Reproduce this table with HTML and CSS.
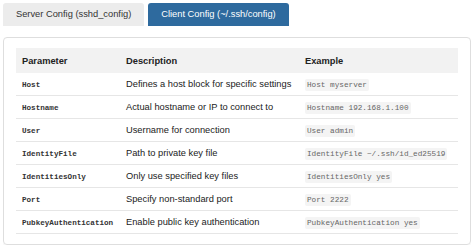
FILE: index.html
```html
<!DOCTYPE html>
<html>
<head>
<meta charset="utf-8">
<link rel="stylesheet" href="styles.css">
</head>
<body>
<div class="tabs">
  <div class="tab">Server Config (sshd_config)</div>
  <div class="tab active">Client Config (~/.ssh/config)</div>
</div>
<div class="card">
  <table class="ref">
    <thead>
      <tr><th class="c1">Parameter</th><th class="c2">Description</th><th class="c3">Example</th></tr>
    </thead>
    <tbody>
      <tr><td><span class="param">Host</span></td><td>Defines a host block for specific settings</td><td><code>Host myserver</code></td></tr>
      <tr><td><span class="param">Hostname</span></td><td>Actual hostname or IP to connect to</td><td><code>Hostname 192.168.1.100</code></td></tr>
      <tr><td><span class="param">User</span></td><td>Username for connection</td><td><code>User admin</code></td></tr>
      <tr><td><span class="param">IdentityFile</span></td><td>Path to private key file</td><td><code>IdentityFile ~/.ssh/id_ed25519</code></td></tr>
      <tr><td><span class="param">IdentitiesOnly</span></td><td>Only use specified key files</td><td><code>IdentitiesOnly yes</code></td></tr>
      <tr><td><span class="param">Port</span></td><td>Specify non-standard port</td><td><code>Port 2222</code></td></tr>
      <tr><td><span class="param">PubkeyAuthentication</span></td><td>Enable public key authentication</td><td><code>PubkeyAuthentication yes</code></td></tr>
    </tbody>
  </table>
</div>
</body>
</html>
```
FILE: styles.css
```css
html, body { background: #fff; }
body {
  margin: 3px;
  font-family: "Liberation Sans", Arial, sans-serif;
  font-size: 9.3px;
  color: #222;
}
.tabs {
  display: flex;
  gap: 4px;
}
.tab {
  height: 23px;
  line-height: 23px;
  padding: 0 13px;
  background: #ececec;
  color: #333;
  border-radius: 3px 3px 0 0;
}
.tab.active {
  background: #2e6a9e;
  color: #fff;
}
.card {
  margin-top: 11px;
  border: 1px solid #dedede;
  border-radius: 4px;
  padding: 10px 12px;
  box-shadow: 0 1px 2px rgba(0,0,0,0.05);
}
.ref {
  width: 100%;
  border-collapse: collapse;
  table-layout: fixed;
}
.ref th {
  height: 25px;
  background: #f2f2f2;
  text-align: left;
  font-weight: bold;
  padding: 0 6px;
  color: #222;
}
.ref .c1 { width: 92px; }
.ref .c2 { width: 167px; }
.ref td {
  height: 22px;
  padding: 0 6px;
  border-bottom: 1px solid #e6e6e6;
  white-space: nowrap;
}
.param {
  font-family: "Liberation Mono", "Courier New", monospace;
  font-weight: bold;
  font-size: 7.6px;
  color: #333;
}
code {
  font-family: "Liberation Mono", "Courier New", monospace;
  font-size: 7.7px;
  background: #f4f4f4;
  color: #666;
  padding: 2px 2px;
  border-radius: 2px;
}
```
